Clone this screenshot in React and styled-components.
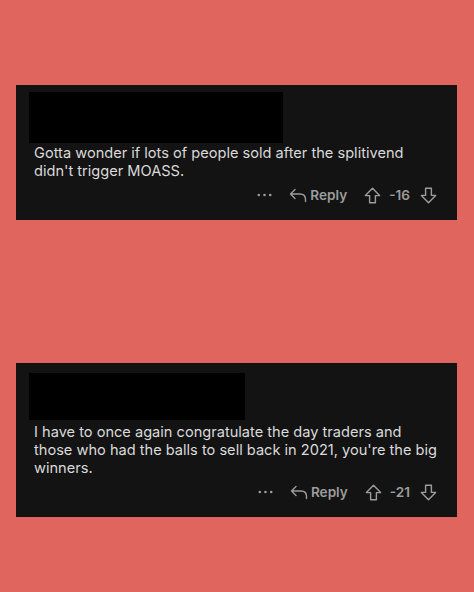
import React from "react";
import styled, { createGlobalStyle } from "styled-components";

const GlobalStyle = createGlobalStyle`
  html, body {
    margin: 0;
    padding: 0;
    background: #e0655e;
  }
  body {
    font-family: Inter, "Liberation Sans", Arial, sans-serif;
  }
`;

const comments = [
  {
    id: 1,
    redactWidth: 254,
    redactHeight: 51,
    top: 7,
    gap: 1,
    text: "Gotta wonder if lots of people sold after the splitivend didn't trigger MOASS.",
    score: -16,
  },
  {
    id: 2,
    redactWidth: 216,
    redactHeight: 47,
    top: 10,
    gap: 3,
    text: "I have to once again congratulate the day traders and those who had the balls to sell back in 2021, you're the big winners.",
    score: -21,
  },
];

function Page() {
  return (
    <Wrap>
      {comments.map((c) => (
        <Card key={c.id} $top={c.top}>
          <Redacted $w={c.redactWidth} $h={c.redactHeight} />
          <Body $gap={c.gap}>{c.text}</Body>
          <Actions>
            <MoreIcon />
            <ReplyBtn>
              <ReplyIcon />
              Reply
            </ReplyBtn>
            <Votes>
              <VoteIcon />
              <Score>{c.score}</Score>
              <VoteIcon $down />
            </Votes>
          </Actions>
        </Card>
      ))}
    </Wrap>
  );
}

function MoreIcon() {
  return (
    <Dots width="15" height="4" viewBox="0 0 15 4">
      <circle cx="1.8" cy="2" r="1.3" fill="currentColor" />
      <circle cx="7.5" cy="2" r="1.3" fill="currentColor" />
      <circle cx="13.2" cy="2" r="1.3" fill="currentColor" />
    </Dots>
  );
}

function ReplyIcon() {
  return (
    <svg width="18" height="15" viewBox="0 0 18 15" fill="none">
      <path
        d="M6 1.5 L1.5 6 L6 10.5 M1.5 6 H11 C14.3 6 16.5 8.2 16.5 11.5 V13.5"
        stroke="currentColor"
        strokeWidth="1.4"
        strokeLinecap="round"
        strokeLinejoin="round"
      />
    </svg>
  );
}

function VoteIcon({ $down }) {
  return (
    <svg
      width="17"
      height="17"
      viewBox="0 0 17 17"
      fill="none"
      style={{ transform: $down ? "rotate(180deg)" : "none" }}
    >
      <path
        d="M8.5 1.2 L15.6 8.6 H11.4 V15.8 H5.6 V8.6 H1.4 Z"
        stroke="currentColor"
        strokeWidth="1.4"
        strokeLinejoin="round"
      />
    </svg>
  );
}

export default function App() {
  return (
    <>
      <GlobalStyle />
      <Page />
    </>
  );
}

const Wrap = styled.div`
  display: flex;
  flex-direction: column;
  gap: 143px;
  padding: 85px 17px 0 16px;
  height: 592px;
  box-sizing: border-box;
`;

const Card = styled.div`
  background: #131313;
  padding: ${(p) => p.$top}px 12px 15px 13px;
  display: flex;
  flex-direction: column;
`;

const Redacted = styled.div`
  width: ${(p) => p.$w}px;
  height: ${(p) => p.$h}px;
  background: #000;
`;

const Body = styled.p`
  margin: ${(p) => p.$gap}px 7px 0 5px;
  color: #dadada;
  font-size: 14.6px;
  line-height: 18px;
`;

const Actions = styled.div`
  display: flex;
  justify-content: flex-end;
  align-items: center;
  height: 20px;
  margin-top: 5px;
  padding-right: 8px;
  color: #9c9c9c;
  font-size: 13.6px;
  font-weight: 600;
`;

const Dots = styled.svg`
  margin-right: 17px;
`;

const ReplyBtn = styled.span`
  display: flex;
  align-items: center;
  gap: 3px;
  margin-right: 17px;
`;

const Votes = styled.span`
  display: flex;
  align-items: center;
  gap: 8px;
`;

const Score = styled.span`
  margin-right: 2px;
`;
